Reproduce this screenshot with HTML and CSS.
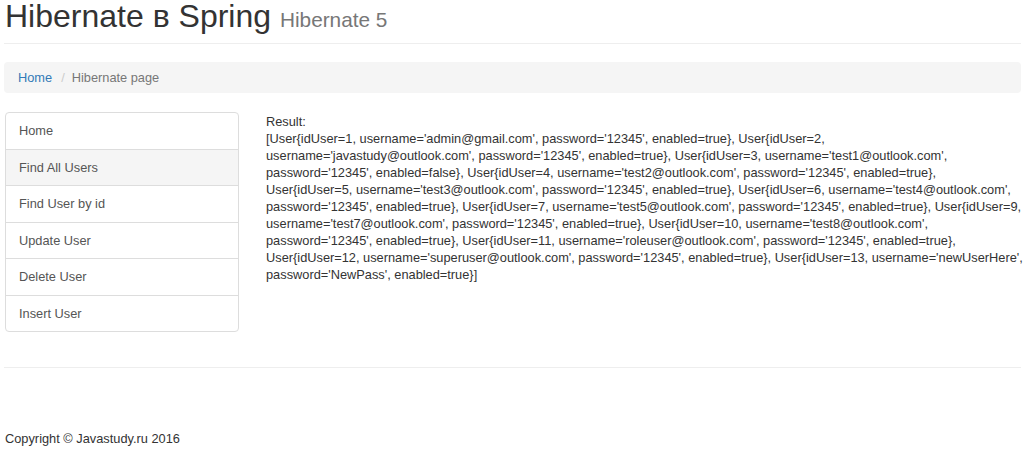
FILE: index.html
```html
<!DOCTYPE html>
<html lang="ru">
<head>
<meta charset="utf-8">
<title>Hibernate в Spring</title>
<link rel="stylesheet" href="styles.css">
</head>
<body>
<div class="container">
  <div class="page-header">
    <h1>Hibernate в Spring <small>Hibernate 5</small></h1>
  </div>
  <ol class="breadcrumb">
    <li><a href="#">Home</a></li>
    <li class="active">Hibernate page</li>
  </ol>
  <div class="row">
    <div class="sidebar">
      <div class="list-group">
        <a href="#" class="list-group-item">Home</a>
        <a href="#" class="list-group-item hover">Find All Users</a>
        <a href="#" class="list-group-item">Find User by id</a>
        <a href="#" class="list-group-item">Update User</a>
        <a href="#" class="list-group-item">Delete User</a>
        <a href="#" class="list-group-item">Insert User</a>
      </div>
    </div>
    <div class="content">
      Result:<br>
      [User{idUser=1, username='admin@gmail.com', password='12345', enabled=true}, User{idUser=2,<br>
      username='javastudy@outlook.com', password='12345', enabled=true}, User{idUser=3, username='test1@outlook.com',<br>
      password='12345', enabled=false}, User{idUser=4, username='test2@outlook.com', password='12345', enabled=true},<br>
      User{idUser=5, username='test3@outlook.com', password='12345', enabled=true}, User{idUser=6, username='test4@outlook.com',<br>
      password='12345', enabled=true}, User{idUser=7, username='test5@outlook.com', password='12345', enabled=true}, User{idUser=9,<br>
      username='test7@outlook.com', password='12345', enabled=true}, User{idUser=10, username='test8@outlook.com',<br>
      password='12345', enabled=true}, User{idUser=11, username='roleuser@outlook.com', password='12345', enabled=true},<br>
      User{idUser=12, username='superuser@outlook.com', password='12345', enabled=true}, User{idUser=13, username='newUserHere',<br>
      password='NewPass', enabled=true}]
    </div>
  </div>
  <hr class="footer-rule">
  <footer class="footer">Copyright © Javastudy.ru 2016</footer>
</div>
</body>
</html>
```
FILE: styles.css
```css
html, body {
  margin: 0;
  padding: 0;
  background: #fff;
}
body {
  font-family: "Liberation Sans", Arial, Helvetica, sans-serif;
  font-size: 12.8px;
  line-height: 17px;
  color: #333;
}
.container {
  margin-left: 4px;
  width: 1017px;
}
.page-header {
  margin: 0 0 18px;
  padding-bottom: 7px;
  border-bottom: 1px solid #eee;
}
h1 {
  margin: 0;
  padding-left: 1px;
  font-size: 32px;
  line-height: 33px;
  font-weight: 500;
  color: #333;
}
h1 small {
  font-size: 65%;
  font-weight: 400;
  color: #777;
}
.breadcrumb {
  list-style: none;
  margin: 0 0 19px;
  padding: 7px 13px 7px 14px;
  background: #f5f5f5;
  border-radius: 4px;
  display: flex;
}
.breadcrumb li + li::before {
  content: "/";
  padding: 0 7px 0 9px;
  color: #ccc;
}
.breadcrumb a {
  color: #337ab7;
  text-decoration: none;
}
.breadcrumb .active {
  color: #777;
}
.row {
  display: flex;
  gap: 27px;
  align-items: flex-start;
}
.sidebar {
  width: 234px;
  flex: none;
  padding-left: 1px;
}
.list-group {
  display: flex;
  flex-direction: column;
  border: 1px solid #ddd;
  border-radius: 4px;
  overflow: hidden;
}
.list-group-item {
  display: block;
  padding: 9.25px 14px 9.25px 13px;
  color: #555;
  text-decoration: none;
  border-top: 1px solid #ddd;
}
.list-group-item:first-child {
  border-top: none;
}
.list-group-item.hover {
  background: #f5f5f5;
}
.content {
  flex: 1;
  min-width: 0;
  padding-top: 1px;
  white-space: nowrap;
}
.footer-rule {
  margin: 35px 0 0;
  border: 0;
  border-top: 1px solid #eee;
}
.footer {
  padding-top: 62px;
  padding-left: 1px;
}
```
